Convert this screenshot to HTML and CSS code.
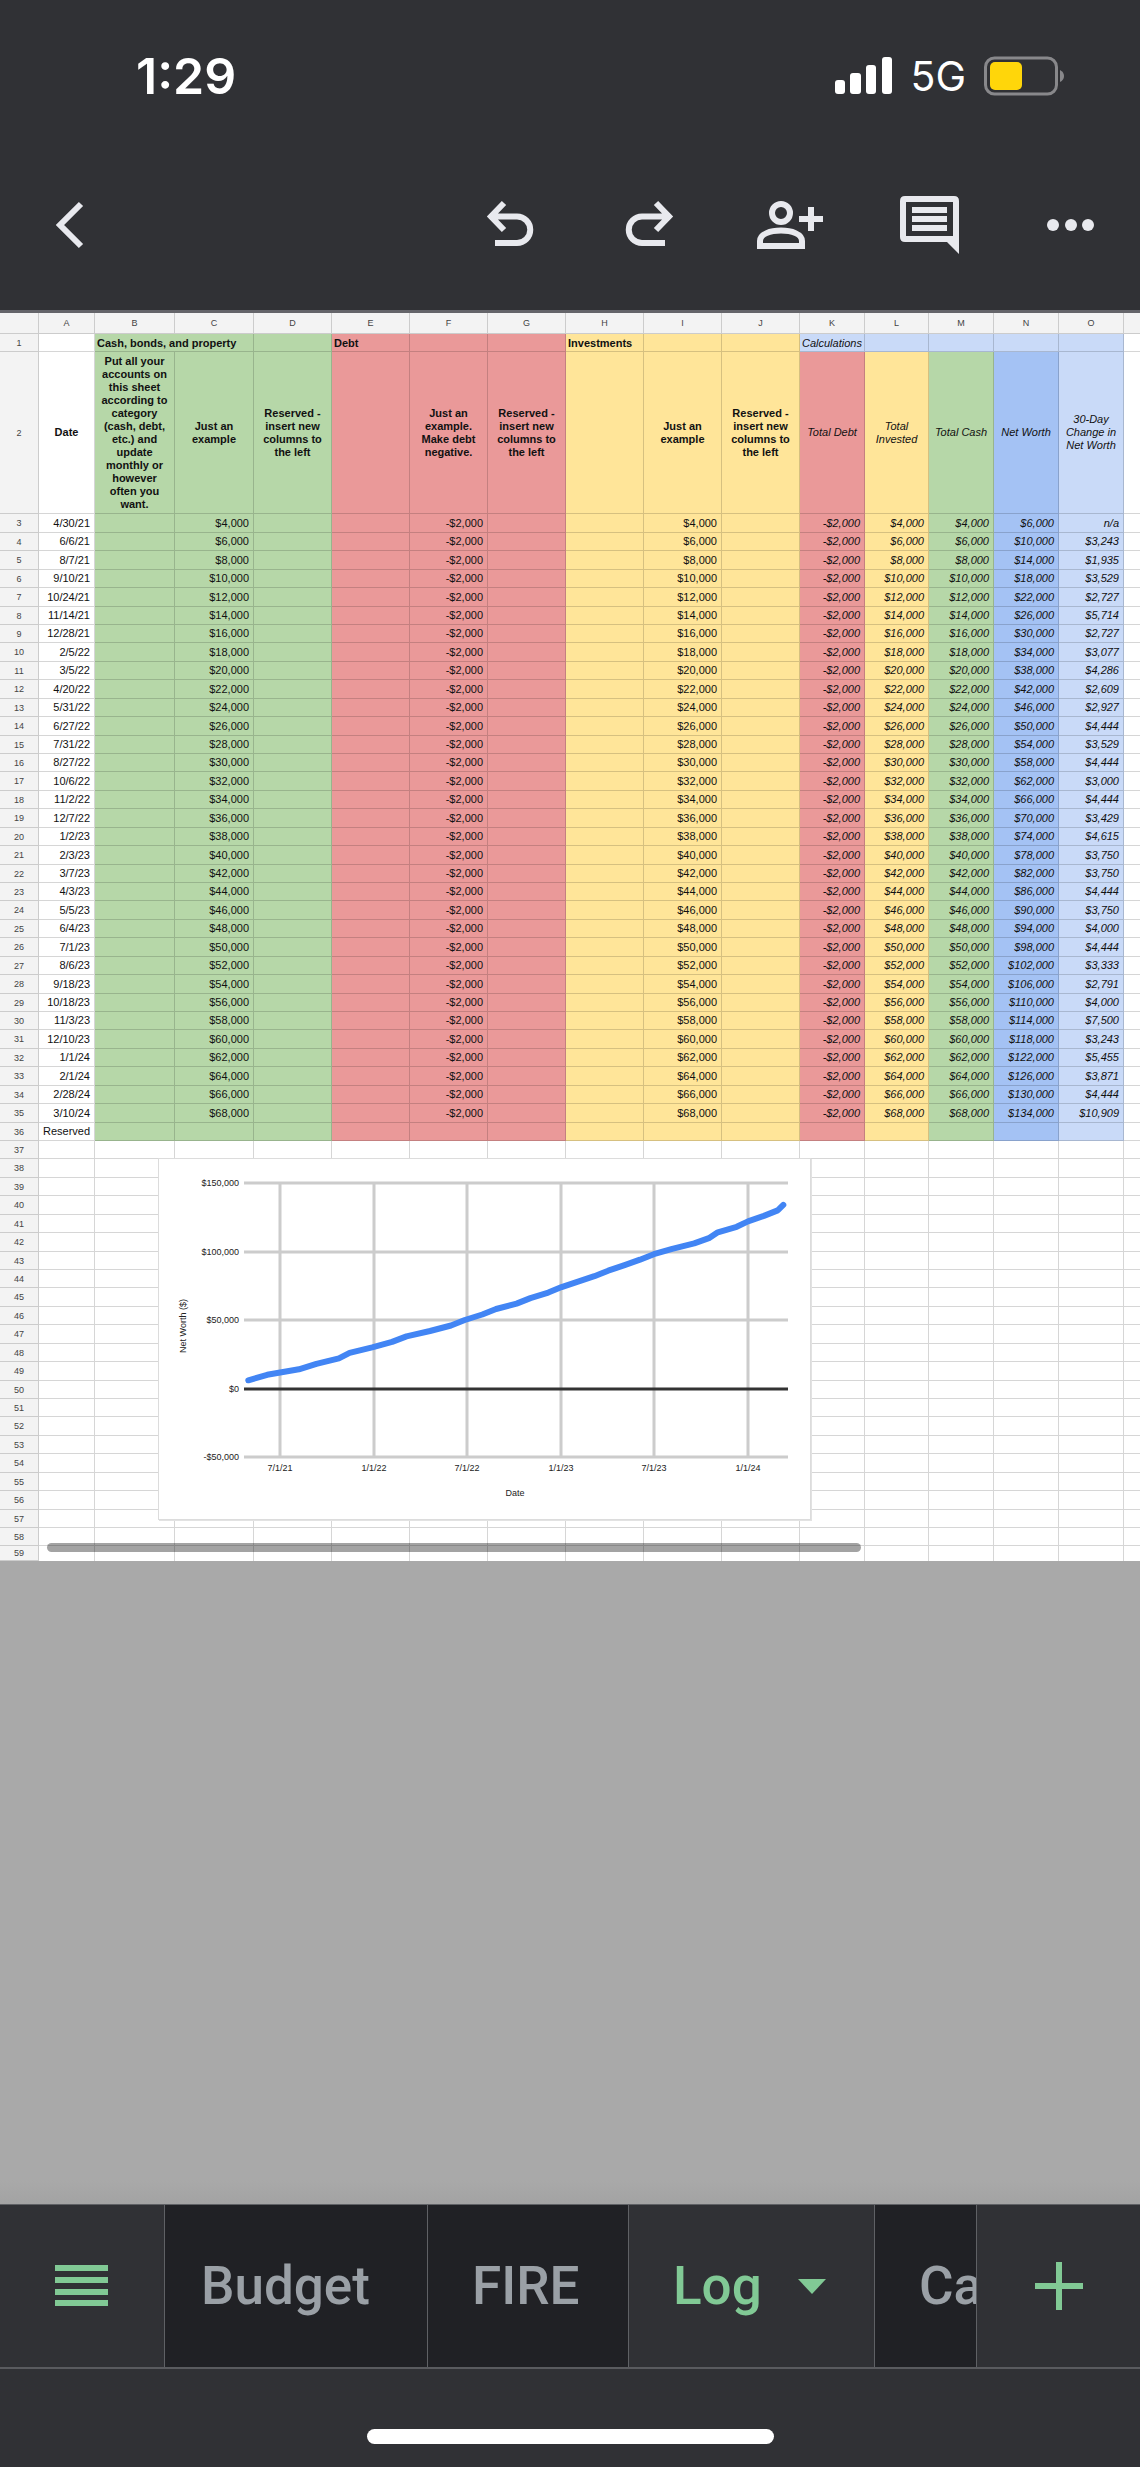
FILE: index.html
```html
<!DOCTYPE html>
<html lang="en">
<head>
<meta charset="utf-8">
<meta name="viewport" content="width=device-width, initial-scale=1">
<title>Log</title>
<link rel="stylesheet" href="styles.css">
</head>
<body>
<div class="app">
  <header class="status">
    <time class="clock">1:29</time>
    <div class="indicators">
      <svg class="signal" width="57" height="38" viewBox="0 0 57 38" role="img" aria-label="Signal strength">
        <rect x="0" y="23" width="10" height="14" rx="3"/>
        <rect x="15" y="16" width="11" height="21" rx="3"/>
        <rect x="31" y="8" width="10" height="29" rx="3"/>
        <rect x="47" y="0" width="10" height="37" rx="3"/>
      </svg>
      <span class="network">5G</span>
      <svg class="battery" width="80" height="40" viewBox="0 0 80 40" role="img" aria-label="Battery">
        <rect class="battery-shell" x="1.500" y="2" width="71" height="36" rx="9"/>
        <path class="battery-nub" d="M76 14q4 2 4 6t-4 6z"/>
        <rect class="battery-level" x="6" y="6" width="32" height="28" rx="5"/>
      </svg>
    </div>
  </header>

  <nav class="toolbar" aria-label="Document">
    <button class="tool back" type="button" aria-label="Back">
      <svg width="60" height="60" viewBox="0 0 60 60"><path class="line" d="M41 9 20 30 41 51"/></svg>
    </button>
    <button class="tool" type="button" aria-label="Undo">
      <svg width="60" height="60" viewBox="0 0 60 60"><path class="line" d="M24 8 11 21.500 24 35M11 21.500H37A13 13 0 0 1 37 48H15"/></svg>
    </button>
    <button class="tool" type="button" aria-label="Redo">
      <svg width="60" height="60" viewBox="0 0 60 60"><path class="line" d="M36 8 49 21.500 36 35M49 21.500H22A13 13 0 0 0 22 48H45"/></svg>
    </button>
    <button class="tool" type="button" aria-label="Share">
      <svg width="68" height="60" viewBox="0 0 68 60">
        <circle class="line" cx="25" cy="18" r="9"/>
        <path class="line" d="M4 51V46C4 32 46 32 46 46V51Z"/>
        <path class="line" d="M43 24H67M55 12V36"/>
      </svg>
    </button>
    <button class="tool" type="button" aria-label="Comments">
      <svg width="60" height="60" viewBox="0 0 60 60">
        <path class="solid" fill-rule="evenodd" d="M5 1H54Q59 1 59 6V59L47 47H5Q0 47 0 42V6Q0 1 5 1ZM6 7V41H53V7Z"/>
        <path class="line" d="M12 15H47M12 24H47M12 33H47"/>
      </svg>
    </button>
    <button class="tool" type="button" aria-label="More">
      <svg width="60" height="60" viewBox="0 0 60 60"><g class="solid"><circle cx="13" cy="30" r="6"/><circle cx="31" cy="30" r="6"/><circle cx="48" cy="30" r="6"/></g></svg>
    </button>
  </nav>

  <main class="workspace">
    <section class="sheet">
      <table class="grid">
        <colgroup>
          <col class="w-num"><col class="w-date"><col class="w-b"><col class="w-c">
          <col class="w-std"><col class="w-std"><col class="w-std"><col class="w-std"><col class="w-std"><col class="w-std"><col class="w-std">
          <col class="w-k"><col class="w-l"><col class="w-calc"><col class="w-calc"><col class="w-calc"><col class="w-rest">
        </colgroup>
        <thead>
          <tr class="letters">
            <th></th><th>A</th><th>B</th><th>C</th><th>D</th><th>E</th><th>F</th><th>G</th><th>H</th><th>I</th><th>J</th><th>K</th><th>L</th><th>M</th><th>N</th><th>O</th><th></th>
          </tr>
        </thead>
        <tbody>
          <tr class="groups">
            <th scope="row">1</th><td></td>
            <td class="green" colspan="2">Cash, bonds, and property</td><td class="green"></td>
            <td class="red">Debt</td><td class="red"></td><td class="red"></td>
            <td class="yellow">Investments</td><td class="yellow"></td><td class="yellow"></td>
            <td class="sky calc">Calculations</td><td class="sky"></td><td class="sky"></td><td class="sky"></td><td class="sky"></td><td></td>
          </tr>
          <tr class="titles">
            <th scope="row">2</th><td>Date</td>
            <td class="green">Put all your accounts on this sheet according to category (cash, debt, etc.) and update monthly or however often you want.</td>
            <td class="green">Just an example</td>
            <td class="green">Reserved - insert new columns to the left</td>
            <td class="red"></td>
            <td class="red">Just an example. Make debt negative.</td>
            <td class="red">Reserved - insert new columns to the left</td>
            <td class="yellow"></td>
            <td class="yellow">Just an example</td>
            <td class="yellow">Reserved - insert new columns to the left</td>
            <td class="red calc">Total Debt</td>
            <td class="yellow calc">Total Invested</td>
            <td class="green calc">Total Cash</td>
            <td class="blue calc">Net Worth</td>
            <td class="sky calc">30-Day Change in Net Worth</td>
            <td></td>
          </tr>
        </tbody>
        <tbody class="entries" id="entries"></tbody>
      </table>

      <figure class="chart">
        <svg id="chart" width="651" height="360" viewBox="0 0 651 360" role="img" aria-label="Net worth by date"></svg>
      </figure>
      <div class="scrollbar"></div>
    </section>
  </main>

  <nav class="tabs" aria-label="Sheets">
    <button class="tab-icon" type="button" aria-label="All sheets">
      <svg width="54" height="42" viewBox="0 0 54 42"><path d="M0 0H53V6H0ZM0 12H53V18H0ZM0 24H53V30H0ZM0 35H53V41H0Z"/></svg>
    </button>
    <div class="tab-strip">
      <button class="tab budget" type="button">Budget</button>
      <button class="tab fire" type="button">FIRE</button>
      <button class="tab log active" type="button" aria-current="page">Log
        <svg width="28" height="15" viewBox="0 0 28 15"><path d="M0 0H28L14 15Z"/></svg>
      </button>
      <button class="tab next" type="button">Ca</button>
    </div>
    <button class="tab-icon add" type="button" aria-label="Add sheet">
      <svg width="48" height="48" viewBox="0 0 48 48"><path d="M21 0H27V21H48V27H27V48H21V27H0V21H21Z"/></svg>
    </button>
  </nav>
  <footer class="home"><div class="home-bar"></div></footer>
</div>
<script src="script.js"></script>
</body>
</html>
```
FILE: styles.css
```css
* { box-sizing: border-box; }

body {
  margin: 0;
  background: #303135;
  font-family: "Liberation Sans", Arial, sans-serif;
}

button {
  margin: 0;
  padding: 0;
  border: 0;
  background: none;
  font: inherit;
  color: inherit;
}

svg { display: block; }

.app {
  display: flex;
  flex-direction: column;
  min-height: 100vh;
}

/* Status bar */
.status {
  display: flex;
  justify-content: space-between;
  align-items: center;
  height: 140px;
  padding: 12px 76px 0 136px;
  color: #fff;
  font-family: Inter, sans-serif;
}
.clock { font-size: 50px; font-weight: 600; line-height: 60px; }
.indicators { display: flex; align-items: center; gap: 18px; }
.signal { fill: #fff; }
.network { font-size: 41px; line-height: 50px; }
.battery-shell { fill: none; stroke: #88888b; stroke-width: 3; }
.battery-nub { fill: #88888b; }
.battery-level { fill: #ffd60a; }

/* Toolbar */
.toolbar {
  display: flex;
  height: 173px;
  border-bottom: 3px solid #646469;
}
.tool {
  display: flex;
  align-items: center;
  justify-content: center;
  width: 140px;
}
.back { margin-right: auto; }
.line { fill: none; stroke: #e8e9ee; stroke-width: 6; }
.solid { fill: #e8e9ee; }

/* Sheet */
.workspace {
  flex: 1;
  background: linear-gradient(to top, #a3a3a3, #a9a9a9 24px);
}
.sheet { position: relative; overflow: hidden; background: #fff; }

.grid {
  width: 100%;
  table-layout: fixed;
  border-collapse: separate;
  border-spacing: 0;
  color: #111;
  font-size: 11px;
  line-height: 13px;
}
.w-num { width: 39px; }
.w-date { width: 56px; }
.w-b { width: 80px; }
.w-c { width: 79px; }
.w-std { width: 78px; }
.w-k { width: 65px; }
.w-l { width: 64px; }
.w-calc { width: 65px; }
.w-rest { width: 16px; }

.grid th, .grid td {
  padding: 0 4px 2px;
  border-right: 1px solid rgba(0, 0, 0, 0.16);
  border-bottom: 1px solid rgba(0, 0, 0, 0.16);
  vertical-align: bottom;
}
.grid th {
  padding: 0;
  background: #f3f3f3;
  color: #444;
  font-size: 9px;
  font-weight: 400;
  line-height: 10px;
  text-align: center;
  vertical-align: middle;
}
.grid tr > :last-child { border-right: 0; }
.letters { height: 21px; }
.groups { height: 18px; }
.grid .groups td {
  padding: 0 2px 1px;
  overflow: hidden;
  font-weight: 700;
  white-space: nowrap;
}
.titles { height: 162px; }
.grid .titles td {
  padding: 0 3px;
  font-weight: 700;
  text-align: center;
  vertical-align: middle;
}
.grid tr .calc.calc { font-style: italic; font-weight: 400; }
.entries td { text-align: right; }
.entries tr { height: 18px; }
.entries tr:nth-child(7n+1),
.entries tr:nth-child(7n+3),
.entries tr:nth-child(7n+5) { height: 19px; }
.entries tr:last-child { height: 15px; }
.entries tr:last-child td { padding: 0; border-bottom: 0; }

.grid .green { background: #b6d7a8; }
.grid .red { background: #ea9999; }
.grid .yellow { background: #ffe599; }
.grid .blue { background: #a4c2f4; }
.grid .sky { background: #c9daf8; }

/* Chart floats over the cells */
.chart {
  position: absolute;
  left: 159px;
  top: 846px;
  margin: 0;
  background: #fff;
  box-shadow: 0 0 0 1px #dcdcdc, 1px 1px 0 1px #e2e2e2;
}
.chart text { fill: #222; font-size: 9px; }
.gridline { stroke: #ccc; stroke-width: 3; }
.baseline { stroke: #333; stroke-width: 3; }
.series {
  fill: none;
  stroke: #4285f4;
  stroke-width: 6;
  stroke-linecap: round;
  stroke-linejoin: round;
}

.scrollbar {
  position: absolute;
  left: 47px;
  bottom: 9px;
  width: 814px;
  height: 9px;
  border-radius: 5px;
  background: rgba(0, 0, 0, 0.36);
}

/* Sheet tabs */
.tabs {
  display: flex;
  height: 165px;
  border-top: 1px solid #5f6165;
  border-bottom: 2px solid #5a5b5f;
  color: #9aa0a6;
  font-family: Roboto, sans-serif;
  font-size: 53px;
  font-weight: 500;
  line-height: 64px;
}
.tab-icon {
  display: flex;
  flex: none;
  align-items: center;
  justify-content: center;
  width: 164px;
  fill: #81c995;
}
.add { border-left: 1px solid #5f6165; }
.tab-strip {
  display: flex;
  flex: 1;
  min-width: 0;
  overflow: hidden;
}
.tab {
  display: flex;
  flex: none;
  align-items: center;
  gap: 36px;
  border-left: 1px solid #5f6165;
  background: #202125;
}
.budget { width: 263px; padding-left: 36px; }
.fire { width: 201px; padding-left: 44px; }
.log { width: 246px; padding-left: 44px; }
.next { padding-left: 44px; }
.active { background: #303135; color: #81c995; fill: #81c995; }

.home { height: 98px; padding-top: 60px; }
.home-bar {
  width: 407px;
  height: 15px;
  margin: 0 auto;
  border-radius: 8px;
  background: #fff;
}
```
FILE: script.js
```js
const dates = [
  "4/30/21", "6/6/21", "8/7/21", "9/10/21", "10/24/21", "11/14/21", "12/28/21",
  "2/5/22", "3/5/22", "4/20/22", "5/31/22", "6/27/22", "7/31/22", "8/27/22",
  "10/6/22", "11/2/22", "12/7/22", "1/2/23", "2/3/23", "3/7/23", "4/3/23",
  "5/5/23", "6/4/23", "7/1/23", "8/6/23", "9/18/23", "10/18/23", "11/3/23",
  "12/10/23", "1/1/24", "2/1/24", "2/28/24", "3/10/24"
];

const day = (text) => {
  const [m, d, y] = text.split("/").map(Number);
  return Date.UTC(2000 + y, m - 1, d) / 86400000;
};
const money = (n) => (n < 0 ? "-$" : "$") + Math.abs(n).toLocaleString("en-US");

const entries = dates.map((date, i) => {
  const cash = 4000 + 2000 * i;
  return { date, cash, invested: cash, debt: -2000, net: cash * 2 - 2000 };
});

const colours = ["", "green", "green", "green", "red", "red", "red", "yellow", "yellow", "yellow",
  "red calc", "yellow calc", "green calc", "blue calc", "sky calc", ""];

const addRow = (number, cells, coloured) => {
  const tds = colours.map((c, i) =>
    `<td${coloured && c ? ` class="${c}"` : ""}>${cells[i] || ""}</td>`).join("");
  return `<tr><th scope="row">${number}</th>${tds}</tr>`;
};

let rows = "";
entries.forEach((e, i) => {
  const before = entries[i - 1];
  const change = before
    ? money(Math.round((e.net - before.net) / (day(e.date) - day(before.date)) * 30))
    : "n/a";
  rows += addRow(i + 3, [e.date, "", money(e.cash), "", "", money(e.debt), "", "", money(e.invested), "",
    money(e.debt), money(e.invested), money(e.cash), money(e.net), change], true);
});
rows += addRow(36, ["Reserved"], true);
for (let n = 37; n <= 59; n++) rows += addRow(n, [], false);
document.getElementById("entries").innerHTML = rows;

// Net worth chart
const left = 85, right = 629, top0 = 24, bottom = 298;
const x = (date) => 121 + (day(date) - day("7/1/21")) * 468 / 914;
const y = (value) => bottom - (value + 50000) / 200000 * (bottom - top0);
let svg = "";
["7/1/21", "1/1/22", "7/1/22", "1/1/23", "7/1/23", "1/1/24"].forEach((d) => {
  const px = Math.round(x(d));
  svg += `<path class="gridline" d="M${px} ${top0}V${bottom}"/>`;
  svg += `<text x="${px}" y="312" text-anchor="middle">${d}</text>`;
});
[150000, 100000, 50000, 0, -50000].forEach((v) => {
  const py = Math.round(y(v));
  svg += `<path class="${v === 0 ? "baseline" : "gridline"}" d="M${left} ${py}H${right}"/>`;
  svg += `<text x="80" y="${py + 3}" text-anchor="end">${money(v)}</text>`;
});
svg += `<polyline class="series" points="${entries.map((e) => x(e.date).toFixed(1) + "," + y(e.net).toFixed(1)).join(" ")}"/>`;
svg += `<text x="356" y="337" text-anchor="middle">Date</text>`;
svg += `<text transform="translate(27 167) rotate(-90)" text-anchor="middle">Net Worth ($)</text>`;
document.getElementById("chart").innerHTML = svg;
```
